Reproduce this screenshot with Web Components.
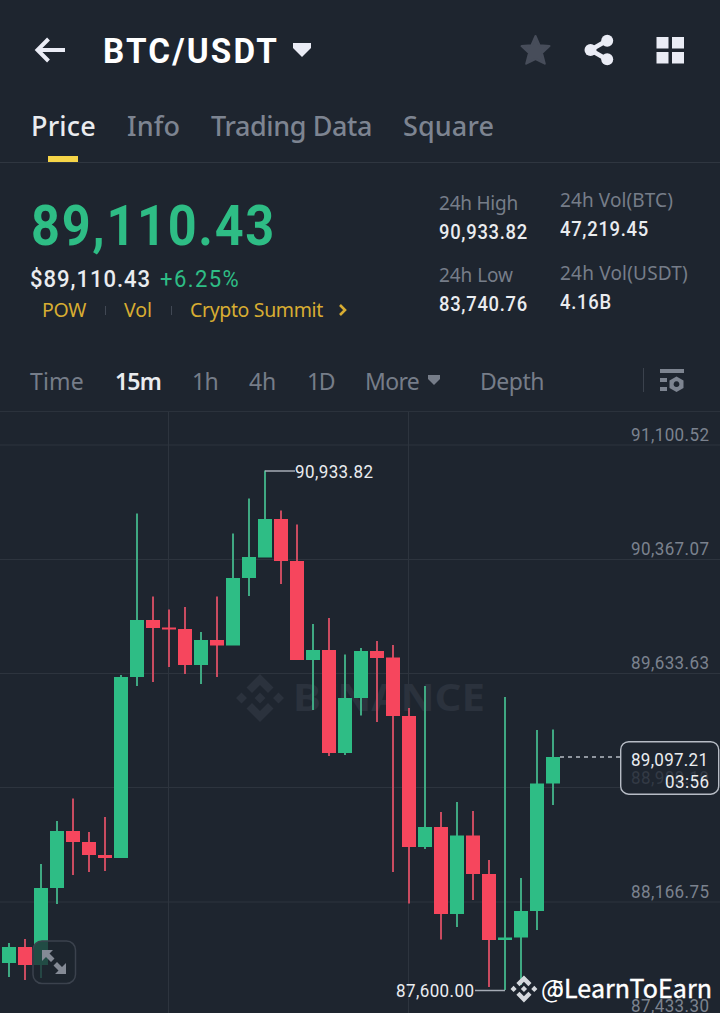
<!DOCTYPE html>
<html lang="en">
<head>
<meta charset="utf-8">
<title>BTC/USDT</title>
<style>
  body {
    margin: 0;
    background: #1e252f;
    font-family: "Noto Sans", sans-serif;
    color: #eaecef;
  }
</style>
</head>
<body>
<trade-page></trade-page>

<script>
// text that spreads its letters over a given width, optionally with narrower glyphs
class FitText extends HTMLElement {
  constructor() {
    super();
    this.attachShadow({ mode: 'open' });
    this.shadowRoot.innerHTML = `
    <style>
      :host { display: block; white-space: nowrap; }
      span { display: inline-block; transform-origin: 0 50%; }
    </style>
    <span><slot></slot></span>
    `;
  }

  connectedCallback() {
    const span = this.shadowRoot.querySelector('span');
    const wanted = Number(this.getAttribute('width'));
    const squeeze = Number(this.getAttribute('squeeze') || 1);
    const count = this.textContent.length;
    const gap = (wanted / squeeze - span.getBoundingClientRect().width) / count;
    span.style.letterSpacing = gap + 'px';
    if (squeeze !== 1) {
      span.style.transform = `scaleX(${squeeze})`;
    }
    this.style.width = wanted + 'px';
  }
}

class PairHeader extends HTMLElement {
  constructor() {
    super();
    this.attachShadow({ mode: 'open' });
    this.shadowRoot.innerHTML = `
    <style>
      :host {
        display: flex;
        align-items: center;
        box-sizing: border-box;
        height: 100px;
        padding: 0 36px 0 34px;
      }
      svg { display: block; }
      .title {
        margin: 4px 13px 0 38px;
        font: 700 35px/40px Roboto, sans-serif;
        color: #fff;
      }
      .icons {
        display: flex;
        align-items: center;
        margin-left: auto;
      }
      .share { margin: 0 42px 0 33px; }
    </style>
    <svg width="31" height="26" viewBox="0 0 31 26" fill="none" stroke="#eaecf5" stroke-width="4">
      <path d="M31 13H4M14.500 2L3.500 13l11 11"/>
    </svg>
    <fit-text class="title" width="176" squeeze=".95">BTC/USDT</fit-text>
    <svg width="20" height="16" viewBox="0 0 20 16" fill="#eaecf5">
      <path d="M1 1h18v5l-9 9L1 6z"/>
    </svg>
    <div class="icons">
      <svg width="31" height="32" viewBox="0 0 31 32" fill="#474d5a" stroke="#474d5a" stroke-width="2" stroke-linejoin="round">
        <path d="M15.500 2l4 9.200 10 .9-7.500 6.800 2.800 10.800-9.300-4.700-9.300 4.700L9 18.900l-7.500-6.800 10-.9z"/>
      </svg>
      <svg class="share" width="30" height="32" viewBox="0 0 30 32" fill="#eaecf5">
        <path d="M23 6.500L6.500 16 23 25.500" fill="none" stroke="#eaecf5" stroke-width="4.500"/>
        <circle cx="6.500" cy="16" r="6"/>
        <circle cx="23.200" cy="6.800" r="6"/>
        <circle cx="23.200" cy="25.200" r="6"/>
      </svg>
      <svg width="28" height="28" viewBox="0 0 28 28" fill="#eaecf5">
        <path d="M.5 1h12v11.500H.5zM16 1h12v11.500H16zM.5 16h12v11.500H.5zM16 16h12v11.500H16z"/>
      </svg>
    </div>
    `;
  }
}

class PageTabs extends HTMLElement {
  constructor() {
    super();
    this.attachShadow({ mode: 'open' });
    this.shadowRoot.innerHTML = `
    <style>
      :host {
        display: flex;
        gap: 31px;
        box-sizing: border-box;
        height: 63px;
        padding: 8px 31px 0;
        border-bottom: 1px solid #2f3640;
        font-size: 27px;
        font-weight: 500;
        line-height: 36px;
        color: #7d8491;
      }
      .tab {
        display: flex;
        flex-direction: column;
        justify-content: space-between;
        align-items: center;
      }
      .active { color: #eaecef; }
      .active::after {
        content: '';
        width: 30px;
        height: 6px;
        margin-right: 2px;
        background: #f6d548;
      }
    </style>
    <div class="tab active"><fit-text width="65">Price</fit-text></div>
    <div class="tab"><fit-text width="53">Info</fit-text></div>
    <div class="tab"><fit-text width="161">Trading Data</fit-text></div>
    <div class="tab"><fit-text width="91">Square</fit-text></div>
    `;
  }
}

class StatCell extends HTMLElement {
  constructor() {
    super();
    this.attachShadow({ mode: 'open' });
    this.shadowRoot.innerHTML = `
    <style>
      :host { display: block; height: 72px; }
      .label { font-size: 19px; line-height: 28px; color: #767d89; }
      .value { margin-top: 1px; font: 500 20px/28px Roboto, sans-serif; color: #eaecef; }
    </style>
    <div class="label"><slot name="label"></slot></div>
    <div class="value"><slot></slot></div>
    `;
  }
}

class PriceSummary extends HTMLElement {
  constructor() {
    super();
    this.attachShadow({ mode: 'open' });
    this.shadowRoot.innerHTML = `
    <style>
      :host {
        display: grid;
        grid-template-columns: 408px 121px 1fr;
        box-sizing: border-box;
        height: 187px;
        padding: 23px 0 0 31px;
      }
      .price {
        margin-top: 9px;
        font: 700 56px/62px Roboto, sans-serif;
        color: #2ebd85;
      }
      .sub {
        display: flex;
        gap: 9px;
        margin: 8px 0 0 -1px;
        font: 500 24px/28px Roboto, sans-serif;
      }
      .change { color: #2ebd85; font-weight: 400; }
      .tags {
        display: flex;
        align-items: center;
        margin: 3px 0 0 11px;
        font-size: 19.500px;
        line-height: 28px;
        color: #d8ad32;
      }
      .tags i { width: 1px; height: 9px; margin: 0 18px 0 19px; background: #414854; }
      .tags svg { margin-left: 15px; }
      .high { padding-top: 3px; }
      .volume stat-cell:first-child { height: 73px; }
    </style>
    <div>
      <fit-text class="price" width="245" squeeze=".9">89,110.43</fit-text>
      <div class="sub">
        <fit-text width="121" squeeze=".92">$89,110.43</fit-text>
        <fit-text class="change" width="80" squeeze=".92">+6.25%</fit-text>
      </div>
      <div class="tags">
        <fit-text width="44">POW</fit-text><i></i>
        <fit-text width="28">Vol</fit-text><i></i>
        <fit-text width="133">Crypto Summit</fit-text>
        <svg width="10" height="12" viewBox="0 0 10 12" fill="none" stroke="#d8ad32" stroke-width="2.600"><path d="M2 1l5 5-5 5"/></svg>
      </div>
    </div>
    <div class="high">
      <stat-cell><fit-text slot="label" width="79">24h High</fit-text><fit-text width="89" squeeze=".92">90,933.82</fit-text></stat-cell>
      <stat-cell><fit-text slot="label" width="74">24h Low</fit-text><fit-text width="89" squeeze=".92">83,740.76</fit-text></stat-cell>
    </div>
    <div class="volume">
      <stat-cell><fit-text slot="label" width="113">24h Vol(BTC)</fit-text><fit-text width="89" squeeze=".92">47,219.45</fit-text></stat-cell>
      <stat-cell><fit-text slot="label" width="128">24h Vol(USDT)</fit-text><fit-text width="52" squeeze=".92">4.16B</fit-text></stat-cell>
    </div>
    `;
  }
}

class IntervalBar extends HTMLElement {
  constructor() {
    super();
    this.attachShadow({ mode: 'open' });
    this.shadowRoot.innerHTML = `
    <style>
      :host {
        display: flex;
        align-items: center;
        box-sizing: border-box;
        height: 62px;
        padding: 1px 35px 0 30px;
        border-bottom: 1px solid #2b323c;
        font-size: 23px;
        line-height: 32px;
        color: #767d89;
      }
      fit-text { margin-right: 31px; }
      .on { color: #eaecef; font-weight: 600; }
      .more { margin-right: 8px; }
      .caret { margin: -3px 39px 0 0; }
      .tools { display: flex; align-items: center; gap: 16px; margin: -2px 0 0 auto; }
      .tools i { width: 1px; height: 24px; background: #3b424d; }
    </style>
    <fit-text width="54">Time</fit-text>
    <fit-text class="on" width="46">15m</fit-text>
    <fit-text width="26">1h</fit-text>
    <fit-text width="27">4h</fit-text>
    <fit-text width="27">1D</fit-text>
    <fit-text class="more" width="54">More</fit-text>
    <svg class="caret" width="14" height="10" viewBox="0 0 14 10" fill="#767d89"><path d="M1 0h12v4L7 10 1 4z"/></svg>
    <fit-text width="64">Depth</fit-text>
    <div class="tools">
      <i></i>
      <svg width="25" height="25" viewBox="0 0 25 25" fill="#7d8490">
        <path d="M0 1h24v4H0zM0 10h7v4H0zM0 19h7v4H0z"/>
        <path fill-rule="evenodd" d="M16.500 8.500l7 4v7.500l-7 4-7-4v-7.500zM16.500 13.300a2.900 2.900 0 1 0 .01 0z"/>
      </svg>
    </div>
    `;
  }
}

// [up, body top, body bottom, high, low] in page pixels
const CANDLES = [
  [1, 947, 963, 943, 977], [0, 947, 965, 939, 980], [1, 888, 965, 864, 978],
  [1, 831, 888, 821, 904], [0, 831, 842, 798.5, 875], [0, 842, 855, 832, 872],
  [0, 855, 858, 817, 871], [1, 677, 858, 675, 858], [1, 620, 677, 513.5, 686],
  [0, 620, 628, 596.5, 682], [0, 627.5, 629.5, 609.5, 667], [0, 629, 665, 607, 674],
  [1, 640, 665, 632, 684], [0, 640, 645.5, 596.5, 677], [1, 578, 645.5, 533.5, 645],
  [1, 557, 578, 498.5, 596], [1, 519, 557.5, 470.5, 557], [0, 519, 561, 510.5, 584],
  [0, 561, 660, 524.5, 660], [1, 650, 660, 624, 710], [0, 650, 753, 618, 756],
  [1, 698, 753, 654.5, 755], [1, 651, 698, 648, 715.5], [0, 651, 658, 641, 722],
  [0, 657.5, 716, 645, 872], [0, 716, 847, 708, 903.5], [1, 827, 847, 686, 849],
  [0, 827, 914, 812, 939.5], [1, 835.5, 914, 802, 927], [0, 835.5, 874, 811, 900],
  [0, 874, 940, 860, 987], [1, 937.5, 940, 697, 990], [1, 911, 937.5, 878, 985],
  [1, 783.5, 911, 730, 930], [1, 757, 783.5, 729.5, 805]
];

const AXIS = [
  [441, '91,100.52'], [555, '90,367.07'], [669, '89,633.63'],
  [898, '88,166.75'], [1012, '87,433.30']
];

const LOGO = 'M24 0L37.500 13.500l-5.500 5.500-8-8-8 8-5.500-5.500zM24 48L10.500 34.500l5.500-5.500 8 8 8-8 5.500 5.500zM5.500 18.500L11 24l-5.500 5.500L0 24zM42.500 18.500L48 24l-5.500 5.500L37 24zM24 18.500l5.500 5.500-5.500 5.500-5.500-5.500z';

// narrow digits, spaced out to the given width
const price = (x, y, width, text, attrs = '') =>
  `<text transform="translate(${x} ${y}) scale(.92 1)" textLength="${width / .92}" ${attrs}>${text}</text>`;

class CandleChart extends HTMLElement {
  constructor() {
    super();
    this.attachShadow({ mode: 'open' });
    const candles = CANDLES.map(([up, top, bottom, high, low], i) => {
      const x = 9 + i * 16;
      return `<g class="${up ? 'up' : 'down'}">
        <rect class="wick" x="${x - 1}" y="${high}" width="2" height="${low - high}"/>
        <rect x="${x - 7}" y="${top}" width="14" height="${bottom - top}"/>
      </g>`;
    }).join('');
    const labels = AXIS.map(([y, text]) => price(631, y, 78, text)).join('');

    this.shadowRoot.innerHTML = `
    <style>
      :host { display: block; height: 601px; }
      svg { display: block; }
      text { font: 400 18.500px Roboto, sans-serif; }
      .up { fill: #2ebd85; }
      .down { fill: #f6465d; }
      .up .wick { fill: #3fa882; }
      .down .wick { fill: #c94b60; }
      .axis { fill: #7b828e; }
      .mark { fill: #eaecef; }
      .brand { font: 700 37px "Noto Sans", sans-serif; }
      .user { fill: #fff; }
      .user text { font: 400 25px "Noto Sans CJK SC", sans-serif; }
      .user .name { stroke: #fff; stroke-width: .4px; }
      .user .digit { font: 400 22px Roboto, sans-serif; }
    </style>
    <svg width="720" height="601" viewBox="0 412 720 601">
      <path d="M0 445h720M0 559.500h720M0 673.500h720M0 787.500h720M0 902h720M168.500 412v601M408.500 412v601" stroke="#2d343e"/>
      <g fill="#2b323d">
        <path transform="translate(236 674)" d="${LOGO}"/>
        <text class="brand" x="293" y="711" textLength="192" lengthAdjust="spacingAndGlyphs">BINANCE</text>
      </g>
      <g class="axis">${labels}</g>
      ${candles}
      <path d="M265 471h30M475 990.500h30" stroke="#a5abb5" stroke-width="1.500"/>
      <g class="mark">
        ${price(295, 478, 78, '90,933.82')}
        ${price(396, 997, 78, '87,600.00')}
      </g>
      <path d="M560 757h61" stroke="#b7bcc5" stroke-width="1.500" stroke-dasharray="4 4"/>
      <g>
        <rect x="620.700" y="741.700" width="98" height="52.500" rx="8" fill="#1e252f" stroke="#b7bcc5" stroke-width="1.400"/>
        ${price(631, 784, 78, '88,900.19', 'fill="#333a45"')}
        ${price(631, 766, 77, '89,097.21', 'class="mark"')}
        ${price(665, 788, 44, '03:56', 'class="mark"')}
      </g>
      <rect x="33" y="941" width="42.500" height="42.500" rx="9" fill="#1e252f" fill-opacity=".75" stroke="#3b424d" stroke-width="1.500"/>
      <path fill="#848a95" d="M42 950h11l-3.500 3.500 5 5-3.500 3.500-5-5L42 961zM66 974H55l3.500-3.500-5-5L57 962l5 5L66 963z"/>
      <path transform="translate(510.500 975.500) scale(.56)" fill="#d5d8dd" d="${LOGO}"/>
      <g class="user">
        <text x="541" y="998" textLength="23" lengthAdjust="spacingAndGlyphs">@</text>
        <text class="digit" x="551" y="997">5</text>
        <text class="name" x="564" y="998" textLength="148">LearnToEarn</text>
      </g>
    </svg>
    `;
  }
}

class TradePage extends HTMLElement {
  constructor() {
    super();
    this.attachShadow({ mode: 'open' });
    this.shadowRoot.innerHTML = `
    <style>
      :host { display: flex; flex-direction: column; width: 720px; height: 1013px; overflow: hidden; }
    </style>
    <pair-header></pair-header>
    <page-tabs></page-tabs>
    <price-summary></price-summary>
    <interval-bar></interval-bar>
    <candle-chart></candle-chart>
    `;
  }
}

customElements.define('fit-text', FitText);
customElements.define('stat-cell', StatCell);
customElements.define('pair-header', PairHeader);
customElements.define('page-tabs', PageTabs);
customElements.define('price-summary', PriceSummary);
customElements.define('interval-bar', IntervalBar);
customElements.define('candle-chart', CandleChart);
customElements.define('trade-page', TradePage);
</script>
</body>
</html>
